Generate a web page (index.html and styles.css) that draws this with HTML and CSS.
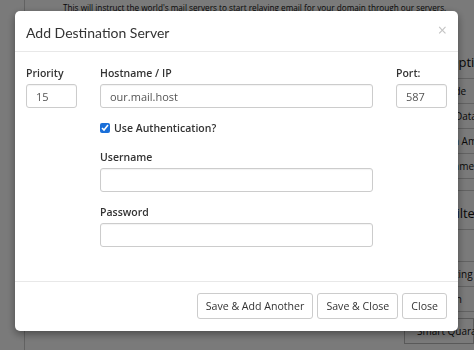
FILE: index.html
```html
<!DOCTYPE html>
<html lang="en">

<head>
    <meta charset="UTF-8">
    <meta name="viewport" content="width=device-width, initial-scale=1.0">
    <link rel="stylesheet" href="styles.css">
    <title>Add Destination Server</title>
</head>

<body>
    <div class="page">
        <div class="main">
            <p class="intro">This will instruct the world's mail servers to start relaying email for your domain through our servers.</p>
        </div>
        <div class="sidebar">
            <h3>Email Options</h3>
            <div class="side-row">Relay Mode</div>
            <div class="side-row">Updated Data</div>
            <div class="side-row">Maximum Amount</div>
            <div class="side-row">Send Parameters</div>
            <div class="side-row short"></div>
            <h3>Spam Filters</h3>
            <div class="side-row tall"></div>
            <div class="side-row">Rate Limiting</div>
            <div class="side-row">Encryption</div>
            <div class="side-box">Smart Quarantine</div>
        </div>
    </div>

    <div class="overlay">
        <div class="modal">
            <div class="modal-header">
                <h4>Add Destination Server</h4>
                <span class="close">&times;</span>
            </div>
            <div class="modal-body">
                <div class="row">
                    <div class="field">
                        <label>Priority</label>
                        <input type="text" value="15">
                    </div>
                    <div class="field">
                        <label>Hostname / IP</label>
                        <input type="text" value="our.mail.host">
                    </div>
                    <div class="field">
                        <label>Port:</label>
                        <input type="text" value="587">
                    </div>
                </div>
                <div class="row">
                    <div class="auth">
                        <label class="check"><input type="checkbox" checked> Use Authentication?</label>
                        <div class="field">
                            <label>Username</label>
                            <input type="text">
                        </div>
                        <div class="field">
                            <label>Password</label>
                            <input type="password">
                        </div>
                    </div>
                </div>
            </div>
            <div class="modal-footer">
                <button>Save &amp; Add Another</button>
                <button>Save &amp; Close</button>
                <button>Close</button>
            </div>
        </div>
    </div>
</body>

</html>
```

FILE: styles.css
```css
* {
    margin: 0;
    padding: 0;
    box-sizing: border-box;
}

body {
    font-family: "Open Sans", "Liberation Sans", sans-serif;
    font-size: 11px;
    color: #333;
    background: #fff;
    height: 350px;
    overflow: hidden;
}

/* page behind the dialog */
.page {
    display: flex;
    height: 100%;
}

.main {
    flex: 1;
    min-width: 0;
    margin-left: 24px;
    padding-left: 38px;
    border-left: 1px solid #ccc;
}

.intro {
    font-size: 8.2px;
    line-height: 12px;
    margin-top: 2px;
    white-space: nowrap;
    color: #111;
}

.sidebar {
    width: 70px;
    margin-top: 54px;
    white-space: nowrap;
    overflow: hidden;
    color: #111;
}

.sidebar h3 {
    font-size: 13px;
    font-weight: 400;
    line-height: 16px;
    padding: 0 0 8px 8px;
    border-bottom: 1px solid #ccc;
}

.side-row {
    height: 25px;
    line-height: 24px;
    font-size: 10px;
    padding-left: 8px;
    border-bottom: 1px solid #ccc;
}

.side-row.short {
    height: 12px;
    margin-bottom: 14px;
}

.side-row.tall {
    height: 32px;
}

.side-box {
    margin-top: 6px;
    border: 1px solid #bbb;
    padding: 5px 12px;
    font-size: 10px;
}

/* dialog */
.overlay {
    position: fixed;
    inset: 0;
    background: rgba(0, 0, 0, 0.52);
}

.modal {
    position: absolute;
    top: 11px;
    left: 15px;
    width: 443px;
    background: #fff;
    border-radius: 5px;
    box-shadow: 0 3px 9px rgba(0, 0, 0, 0.4);
}

.modal-header {
    display: flex;
    justify-content: space-between;
    align-items: center;
    height: 41px;
    padding: 0 11px;
    border-bottom: 1px solid #e8e8e8;
}

.modal-header h4 {
    font-family: Lato, "Open Sans", sans-serif;
    font-size: 14px;
    font-weight: 400;
    color: #333;
    margin-top: 2px;
}

.close {
    font-size: 16px;
    color: #c4c4c4;
    margin-top: -3px;
}

.modal-body {
    padding: 13px 11px 34px;
}

.row {
    display: grid;
    grid-template-columns: 51px 1fr 51px;
    column-gap: 23px;
}

.field label {
    display: block;
    font-size: 10.5px;
    font-weight: 600;
    line-height: 17px;
    margin-bottom: 2px;
}

.field input {
    width: 100%;
    height: 24px;
    border: 1px solid #ccc;
    border-radius: 3px;
    padding: 0 9px;
    font-family: inherit;
    font-size: 11px;
    color: #555;
    box-shadow: inset 0 1px 1px rgba(0, 0, 0, 0.05);
}

.auth {
    grid-column: 2;
}

.check {
    display: flex;
    align-items: center;
    gap: 4px;
    font-size: 10.5px;
    font-weight: 600;
    line-height: 16px;
    margin: 12px 0 13px;
}

.check input {
    width: 10px;
    height: 10px;
    accent-color: #1a6fd9;
}

.auth .field + .field {
    margin-top: 12px;
}

.modal-footer {
    display: flex;
    justify-content: flex-end;
    gap: 4px;
    padding: 11px 11px 12px;
    border-top: 1px solid #e8e8e8;
}

.modal-footer button {
    height: 26px;
    padding: 0 8px;
    font-family: inherit;
    font-size: 10.6px;
    color: #333;
    background: #fff;
    border: 1px solid #ccc;
    border-radius: 3px;
}
```
